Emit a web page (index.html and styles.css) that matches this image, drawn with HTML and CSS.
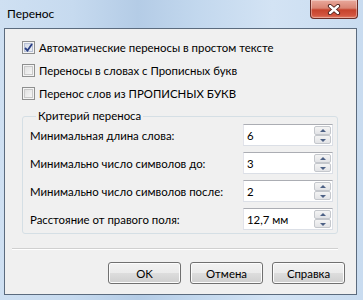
FILE: index.html
```html
<!doctype html>
<html lang="ru">
<head>
    <meta charset="UTF-8">
    <title>Перенос</title>
    <link rel="stylesheet" href="styles.css">
</head>
<body>
    <div class="window">
        <div class="titlebar">
            <span class="title">Перенос</span>
            <span class="close">
                <svg width="14" height="11" viewBox="0 0 14 11">
                    <path d="M3 2 L11 9 M11 2 L3 9" stroke="#4a1f1a" stroke-width="4.2" stroke-linecap="round"/>
                    <path d="M3 2 L11 9 M11 2 L3 9" stroke="#fff" stroke-width="2.4" stroke-linecap="round"/>
                </svg>
            </span>
        </div>
        <div class="client">
            <div class="checks">
                <label class="check-row">
                    <span class="box checked">
                        <svg width="9" height="9" viewBox="0 0 9 9">
                            <path d="M1 5 L3.5 7.5 L8 1" fill="none" stroke="#2a3f84" stroke-width="1.8"/>
                        </svg>
                    </span>
                    Автоматические переносы в простом тексте
                </label>
                <label class="check-row">
                    <span class="box"></span>
                    Переносы в словах с Прописных букв
                </label>
                <label class="check-row">
                    <span class="box"></span>
                    Перенос слов из ПРОПИСНЫХ БУКВ
                </label>
            </div>

            <fieldset class="group">
                <legend>Критерий переноса</legend>
                <div class="field-row">
                    <span>Минимальная длина слова:</span>
                    <div class="spin"><span class="value">6</span><span class="arrows"><i class="up"></i><i class="down"></i></span></div>
                </div>
                <div class="field-row">
                    <span>Минимально число символов до:</span>
                    <div class="spin"><span class="value">3</span><span class="arrows"><i class="up"></i><i class="down"></i></span></div>
                </div>
                <div class="field-row">
                    <span>Минимально число символов после:</span>
                    <div class="spin"><span class="value">2</span><span class="arrows"><i class="up"></i><i class="down"></i></span></div>
                </div>
                <div class="field-row">
                    <span>Расстояние от правого поля:</span>
                    <div class="spin"><span class="value">12,7 мм</span><span class="arrows"><i class="up"></i><i class="down"></i></span></div>
                </div>
            </fieldset>

            <div class="separator"></div>

            <div class="buttons">
                <button class="btn">OK</button>
                <button class="btn">Отмена</button>
                <button class="btn">Справка</button>
            </div>
        </div>
    </div>
</body>
</html>
```

FILE: styles.css
```css
body{
    margin: 0;
    font-family: Lato, "Noto Sans", sans-serif;
    font-size: 11.4px;
    color: #000;
    background: #c4d7ec;
    white-space: nowrap;
}
.window{
    width: 363px;
    height: 300px;
    background: linear-gradient(90deg, #cfe0f2 0%, #c6daef 20%, #b4cce6 38%, #c3d8ee 55%, #d3e3f4 75%, #c9dcf0 100%);
    display: flex;
    flex-direction: column;
}
.titlebar{
    height: 28px;
    position: relative;
    display: flex;
    align-items: center;
}
.title{
    margin-left: 7px;
    margin-top: -2px;
    font-size: 12px;
}
.close{
    position: absolute;
    left: 310px;
    top: 0;
    width: 48px;
    height: 19px;
    box-sizing: border-box;
    border: 1px solid #6b2d27;
    border-top: none;
    border-radius: 0 0 4px 4px;
    background: linear-gradient(#e9a99c 0%, #d98473 45%, #c6432c 55%, #d2553f 85%, #e07e66 100%);
    box-shadow: inset 0 0 0 1px rgba(255,255,255,0.35);
    display: flex;
    align-items: center;
    justify-content: center;
}
.client{
    margin: 0 6px 5px 4px;
    height: 267px;
    box-sizing: border-box;
    border: 1px solid #5b6b7e;
    background: #f0f0f0;
    padding: 7px 0 0;
    display: flex;
    flex-direction: column;
}
.checks{
    padding-left: 17px;
}
.check-row{
    height: 23px;
    display: flex;
    align-items: center;
}
.box{
    width: 13px;
    height: 13px;
    box-sizing: border-box;
    border: 1px solid #8e8f8f;
    background: linear-gradient(135deg, #dcdcdc, #fbfbfb);
    box-shadow: inset 0 0 0 1px #f4f4f4, inset 0 0 0 2px #c9c9c9;
    margin-right: 4px;
    display: flex;
    align-items: center;
    justify-content: center;
}
.box.checked{
    background: linear-gradient(135deg, #cfd6e4, #f3f5f9);
    box-shadow: inset 0 0 0 1px #f4f4f4, inset 0 0 0 2px #b8c1d6;
}
.group{
    margin: 3px 18px 0 17px;
    padding: 0 4px 3px 7px;
    border: 1px solid #d5dfe5;
    border-radius: 3px;
    display: flex;
    flex-direction: column;
    gap: 6px;
}
.group legend{
    padding: 0 2px;
    margin-left: 6px;
    line-height: 16px;
}
.field-row{
    height: 22px;
    display: flex;
    align-items: center;
    justify-content: space-between;
}
.spin{
    width: 90px;
    height: 22px;
    box-sizing: border-box;
    border: 1px solid #dbdfe6;
    border-top-color: #abadb3;
    border-left-color: #e2e3ea;
    background: #fff;
    display: flex;
    align-items: center;
    justify-content: space-between;
    padding: 0 1px 0 3px;
}
.arrows{
    width: 17px;
    height: 18px;
    display: flex;
    flex-direction: column;
}
.arrows i{
    flex: 1;
    box-sizing: border-box;
    border: 1px solid #c4c7cc;
    border-radius: 2px;
    background: linear-gradient(#f4f4f4, #e2e3e6);
    position: relative;
}
.arrows i::after{
    content: "";
    position: absolute;
    left: 50%;
    top: 50%;
    margin-left: -3px;
    border-left: 3px solid transparent;
    border-right: 3px solid transparent;
}
.arrows .up::after{
    margin-top: -2px;
    border-bottom: 3px solid #4d6185;
}
.arrows .down::after{
    margin-top: -1px;
    border-top: 3px solid #4d6185;
}
.separator{
    margin: 14px 18px 0 7px;
    height: 1px;
    background: #d0d0d0;
    border-bottom: 1px solid #fff;
}
.buttons{
    margin-top: 12px;
    padding-right: 11px;
    display: flex;
    justify-content: flex-end;
    gap: 9px;
}
.btn{
    width: 73px;
    height: 22px;
    font: inherit;
    color: #000;
    border: 1px solid #707070;
    border-radius: 3px;
    background: linear-gradient(#f2f2f2 0%, #ebebeb 50%, #dddddd 51%, #cfcfcf 100%);
    box-shadow: inset 0 0 0 1px #fcfcfc;
    padding: 0;
}
```
